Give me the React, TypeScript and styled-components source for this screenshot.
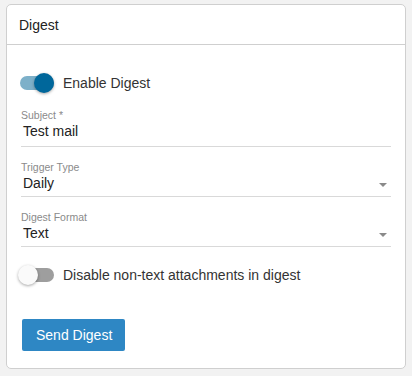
import React, { useState } from "react";
import styled, { createGlobalStyle } from "styled-components";

const GlobalStyle = createGlobalStyle`
  html, body {
    margin: 0;
    padding: 0;
    background: #f2f2f2;
    font-family: "Liberation Sans", Arial, sans-serif;
  }
`;

const Page = styled.div`
  padding: 4px 6px 7px 6px;
`;

const Card = styled.section`
  background: #fff;
  border: 1px solid #cfcfcf;
  border-radius: 5px;
  box-sizing: border-box;
  height: 365px;
  display: flex;
  flex-direction: column;
`;

const CardHeader = styled.header`
  height: 39px;
  display: flex;
  align-items: center;
  padding: 0 12px;
  border-bottom: 1px solid #cfcfcf;
  font-size: 14px;
  color: #222;
`;

const CardBody = styled.div`
  display: flex;
  flex-direction: column;
  padding: 26px 13px 0 13px;
`;

const ToggleRow = styled.label<{ $top?: number }>`
  display: flex;
  align-items: center;
  height: 24px;
  margin-top: ${p => p.$top ?? 0}px;
  cursor: pointer;
`;

const Track = styled.span<{ $on: boolean }>`
  position: relative;
  width: 34px;
  height: 14px;
  border-radius: 7px;
  flex-shrink: 0;
  background: ${p => (p.$on ? "#7db0c9" : "#9e9e9e")};
`;

const Thumb = styled.span<{ $on: boolean }>`
  position: absolute;
  top: -3px;
  left: ${p => (p.$on ? "14px" : "-2px")};
  width: 20px;
  height: 20px;
  border-radius: 50%;
  background: ${p => (p.$on ? "#00679b" : "#fafafa")};
  box-shadow: 0 1px 3px rgba(0, 0, 0, 0.35);
`;

const ToggleText = styled.span`
  margin-left: 9px;
  font-size: 14px;
  color: #333;
`;

const Field = styled.div<{ $top: number; $pad: number }>`
  margin: ${p => p.$top}px 1px 0 1px;
  padding-bottom: ${p => p.$pad}px;
  border-bottom: 1px solid #d9d9d9;
  position: relative;
`;

const FieldLabel = styled.div`
  font-size: 10.5px;
  line-height: 11px;
  color: #8a8a8a;
  margin-bottom: 1px;
`;

const FieldValue = styled.div`
  font-size: 14px;
  line-height: 18px;
  color: #222;
  padding-left: 2px;
`;

const Caret = styled.span`
  position: absolute;
  right: 4px;
  bottom: 9px;
  width: 0;
  height: 0;
  border-left: 4px solid transparent;
  border-right: 4px solid transparent;
  border-top: 4px solid #8a8a8a;
`;

const SendButton = styled.button`
  align-self: flex-start;
  margin: 32px 0 0 2px;
  height: 32px;
  padding: 0 13px 0 14px;
  border: none;
  border-radius: 2px;
  background: #2e87c4;
  color: #fff;
  font-family: "Liberation Sans", Arial, sans-serif;
  font-size: 14px;
  cursor: pointer;
`;

function Toggle({
  on,
  label,
  top,
  onChange,
}: {
  on: boolean;
  label: string;
  top?: number;
  onChange: () => void;
}) {
  return (
    <ToggleRow $top={top} onClick={onChange}>
      <Track $on={on}>
        <Thumb $on={on} />
      </Track>
      <ToggleText>{label}</ToggleText>
    </ToggleRow>
  );
}

export default function App() {
  const [enabled, setEnabled] = useState(true);
  const [noAttachments, setNoAttachments] = useState(false);

  return (
    <Page>
      <GlobalStyle />
      <Card>
        <CardHeader>Digest</CardHeader>
        <CardBody>
          <Toggle on={enabled} label="Enable Digest" onChange={() => setEnabled(!enabled)} />
          <Field $top={15} $pad={6}>
            <FieldLabel>Subject *</FieldLabel>
            <FieldValue>Test mail</FieldValue>
          </Field>
          <Field $top={15} $pad={4}>
            <FieldLabel>Trigger Type</FieldLabel>
            <FieldValue>Daily</FieldValue>
            <Caret />
          </Field>
          <Field $top={15} $pad={4}>
            <FieldLabel>Digest Format</FieldLabel>
            <FieldValue>Text</FieldValue>
            <Caret />
          </Field>
          <Toggle
            on={noAttachments}
            top={16}
            label="Disable non-text attachments in digest"
            onChange={() => setNoAttachments(!noAttachments)}
          />
          <SendButton>Send Digest</SendButton>
        </CardBody>
      </Card>
    </Page>
  );
}
